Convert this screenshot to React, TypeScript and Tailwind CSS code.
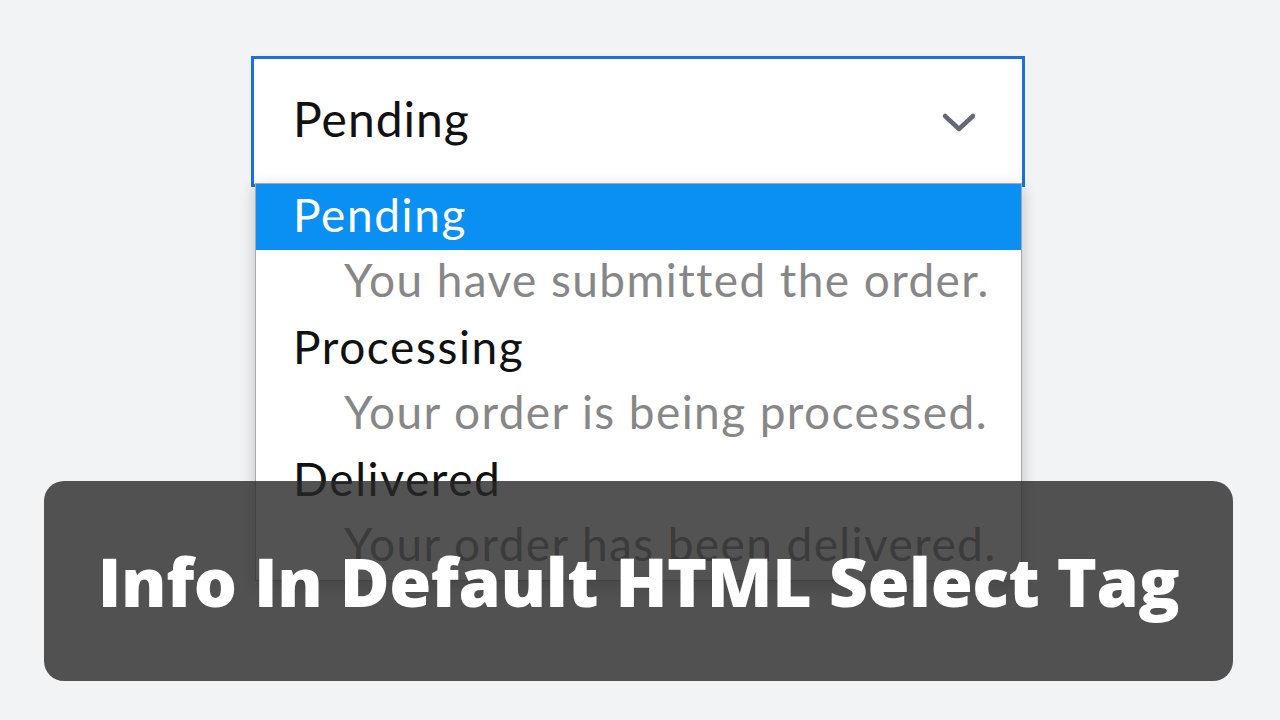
import React from "react";

const options = [
  { label: "Pending", info: "You have submitted the order.", active: true },
  { label: "Processing", info: "Your order is being processed.", active: false },
  { label: "Delivered", info: "Your order has been delivered.", active: false },
];

export default function App() {
  return (
    <div className="relative w-[1280px] h-[720px] overflow-hidden bg-[#f2f3f5] [font-family:Lato,'Noto_Sans',sans-serif]">
      <div className="pt-[56px] pl-[251px]">
        <div className="relative w-[774px]">
          <div className="h-[131px] bg-white border-[3px] border-[#1a6fe3] flex items-center justify-between pl-[39px] pr-[45px]">
            <span className="text-[48px] leading-none text-[#111] tracking-[1px] pb-[6px]">Pending</span>
            <svg width="36" height="24" viewBox="0 0 36 24" fill="none">
              <path d="M4 6 L18 19 L32 6" stroke="#636a75" strokeWidth="4.5" strokeLinecap="round" strokeLinejoin="round" />
            </svg>
          </div>
          <div className="absolute left-[4px] top-[127px] w-[767px] bg-white border border-[#a8a8a8] shadow-[0_4px_14px_rgba(0,0,0,0.22)]">
            {options.map((o) => (
              <React.Fragment key={o.label}>
                <div
                  className={`h-[66px] flex items-center pl-[37px] pb-[4px] text-[46px] leading-none tracking-[1.6px] ${
                    o.active ? "bg-[#0a90f2] text-white" : "text-[#111]"
                  }`}
                >
                  {o.label}
                </div>
                <div className="h-[66px] flex items-center pl-[88px] pb-[6px] text-[46px] leading-none tracking-[1.4px] text-[#878787]">
                  {o.info}
                </div>
              </React.Fragment>
            ))}
          </div>
        </div>
      </div>
      <div className="absolute left-[44px] top-[481px] w-[1189px] h-[200px] rounded-[20px] bg-[rgba(40,40,40,0.8)] flex items-center justify-center">
        <span className="text-white text-[68px] font-extrabold leading-none [font-family:'Open_Sans',sans-serif] tracking-[-0.4px]">
          Info In Default HTML Select Tag
        </span>
      </div>
    </div>
  );
}
